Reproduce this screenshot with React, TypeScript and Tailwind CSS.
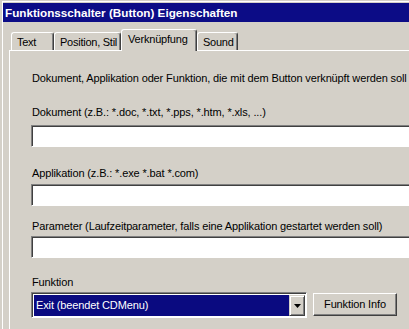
const FONT = "font-['Liberation_Sans',Arial,sans-serif]"

function Tab({ label, width, selected = false }: { label: string; width: string; selected?: boolean }) {
  if (selected) {
    return (
      <div
        className={`relative z-10 -mb-px flex h-[22px] ${width} items-start rounded-t-[3px] border-l border-t border-r border-white border-r-[#404040] bg-[#d4d0c8] pl-[6px] pt-[3px] shadow-[inset_-1px_0_0_#808080]`}
      >
        <span className="whitespace-nowrap text-[11px] leading-[13px] tracking-[-0.2px] text-black">{label}</span>
      </div>
    )
  }
  return (
    <div
      className={`flex h-[18px] ${width} items-start rounded-t-[3px] border-l border-t border-r border-white border-r-[#404040] bg-[#d4d0c8] pl-[5px] pt-[3px] shadow-[inset_-1px_0_0_#808080]`}
    >
      <span className="whitespace-nowrap text-[11px] leading-[13px] tracking-[-0.25px] text-black">{label}</span>
    </div>
  )
}

function TextField({ className = '' }: { className?: string }) {
  return (
    <div
      className={`h-[22px] w-[400px] border border-t-[#808080] border-l-[#808080] border-b-white border-r-white bg-white shadow-[inset_1px_1px_0_#404040] ${className}`}
    />
  )
}

export default function App() {
  return (
    <div className={`h-[329px] w-[409px] overflow-hidden bg-[#d4d0c8] pt-px ${FONT}`}>
      <div className="ml-[2px] h-[400px] border-l border-t border-white pt-px">
        {/* Title bar */}
        <div className="flex h-[19px] items-center bg-[#0c0c86] pl-[2px]">
          <span className="whitespace-nowrap text-[11.7px] font-bold leading-none text-white">
            Funktionsschalter (Button) Eigenschaften
          </span>
        </div>

        {/* Tabs */}
        <div className="ml-[6px] mt-[7px]">
          <div className="flex items-end pl-[2px]">
            <Tab label="Text" width="w-[43px]" />
            <Tab label="Position, Stil" width="w-[67px]" />
            <Tab label="Verknüpfung" width="w-[76px]" selected />
            <Tab label="Sound" width="w-[41px]" />
          </div>

          {/* Panel */}
          <div className="h-[300px] whitespace-nowrap border-l border-t border-white pl-[22px] pt-[21px] text-[11px] leading-[13px] tracking-[-0.13px] text-black">
            <p>Dokument, Applikation oder Funktion, die mit dem Button verknüpft werden soll</p>

            <p className="mt-[21px]">Dokument (z.B.: *.doc, *.txt, *.pps, *.htm, *.xls, ...)</p>
            <TextField className="-ml-px mt-[6px]" />

            <p className="mt-[20px]">Applikation (z.B.: *.exe *.bat *.com)</p>
            <TextField className="-ml-px mt-[4px]" />

            <p className="mt-[14px]">Parameter (Laufzeitparameter, falls eine Applikation gestartet werden soll)</p>
            <TextField className="-ml-px mt-[3px]" />

            <p className="mt-[18px]">Funktion</p>
            <div className="-ml-px mt-[3px] flex items-start">
              {/* Combo box */}
              <div className="flex h-[26px] w-[276px] border border-t-[#808080] border-l-[#808080] border-b-white border-r-white bg-white p-px shadow-[inset_1px_1px_0_#404040]">
                <div className="ml-px mt-px flex h-[21px] flex-1 items-center bg-[#0a0a80] pl-[2px]">
                  <span className="text-[11px] leading-none text-white">Exit (beendet CDMenu)</span>
                </div>
                <div className="mt-px flex h-[21px] w-[16px] items-center justify-center border border-t-[#d4d0c8] border-l-[#d4d0c8] border-b-[#404040] border-r-[#404040] bg-[#d4d0c8] shadow-[inset_1px_1px_0_#ffffff,inset_-1px_-1px_0_#808080]">
                  <svg width="7" height="4" viewBox="0 0 7 4">
                    <path d="M0 0H7L3.5 4Z" fill="#000" />
                  </svg>
                </div>
              </div>

              <button className="ml-[6px] mt-px flex h-[23px] w-[84px] items-center justify-center border border-t-white border-l-white border-b-[#404040] border-r-[#404040] bg-[#d4d0c8] text-[11px] leading-none text-black shadow-[inset_-1px_-1px_0_#808080]">
                Funktion Info
              </button>
            </div>
          </div>
        </div>
      </div>
    </div>
  )
}
